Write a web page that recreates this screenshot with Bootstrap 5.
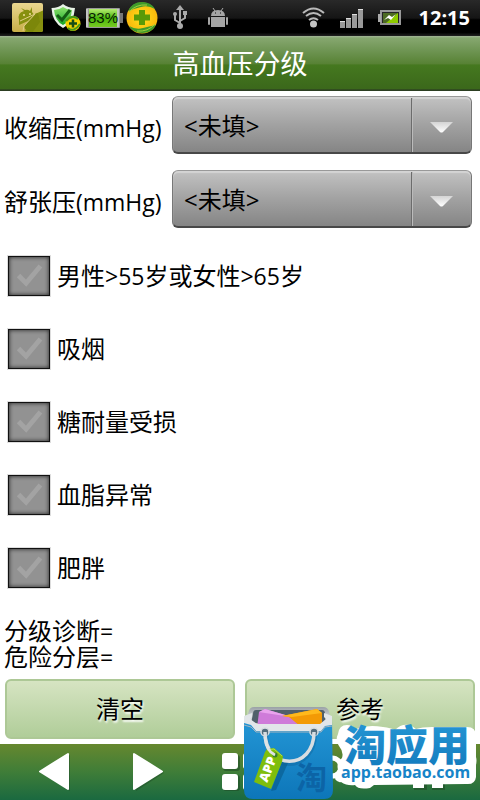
<!DOCTYPE html>
<html lang="zh-CN">
<head>
<meta charset="utf-8">
<meta name="viewport" content="width=device-width, initial-scale=1">
<title>高血压分级</title>
<link href="https://cdn.jsdelivr.net/npm/bootstrap@5.3.0/dist/css/bootstrap.min.css" rel="stylesheet">
<style>
body{font-family:"Open Sans","Noto Sans CJK SC",sans-serif;font-size:24px;line-height:26px;color:#000;background:#fff}
.app{min-height:100vh}
.latin{font-size:23px}
.status-bar{height:36px;background:linear-gradient(#292929,#151515 50%,#000 55%,#000 90%,#222)}
.status-bar svg{height:36px;flex:none}
.clock{font-size:20px;font-weight:700;color:#fff;padding:0 10px 0 14px}
.title-bar{height:55px;padding-top:1px;font-size:27px;font-weight:400;color:#fff;background:linear-gradient(#a3b698,#86a76f 4%,#709655 25%,#588235 50%,#45781f 53%,#3b681b 96%,#2c3e22 98%,#2c3e22)}
.field-row{min-height:74px;padding:5px 8px 11px 4px}
.field-row label{width:168px;flex:none;padding-top:6px;white-space:nowrap}
.picker{position:relative}
.picker select{display:block;height:58px;width:100%;padding:2px 70px 0 11px;appearance:none;color:#000;border:1px solid #777;border-top-color:#999;border-bottom:2px solid #484848;border-radius:6px;background:linear-gradient(#c2c2c2,#a2a2a2 50%,#858585);box-shadow:inset 0 2px 1px #d4d4d4}
.picker svg{position:absolute;right:0;top:0;pointer-events:none}
.check-row{height:73px}
.check-row input{appearance:none;flex:none;width:42px;height:40px;margin:1px 7px 0 0;border:1px solid #111;outline:1px solid #ddd;box-shadow:inset 0 0 4px #222;background:#929292 url("data:image/svg+xml,%3Csvg xmlns='http://www.w3.org/2000/svg' viewBox='0 0 42 39'%3E%3Cpath d='M10 19l8 8 15-18' fill='none' stroke='%23a3a3a3' stroke-width='5'/%3E%3C/svg%3E") center/100% 100% no-repeat}
.check-row input:checked{background-color:#6fa04a}
.results{padding:0 4px}
.actions{padding:9px 5px 5px;gap:10px}
.actions .btn{height:60px;font-size:24px;color:#000;border:2px solid #adc896;border-radius:6px;background:linear-gradient(#d6e4c2,#b0cd99);text-shadow:1px 2px 2px #fff}
.nav-strip{height:56px;padding:0 6px;background:linear-gradient(#66882f,#3f7d38 50%,#1a6940)}
.nav-strip button{border:0;background:none;padding:0}
.watermark{position:absolute;right:0;bottom:0;pointer-events:none}
.wm-name{font:900 42px "Noto Sans CJK SC",sans-serif}
.wm-url{font:700 16px "Open Sans",sans-serif}
.wm-tag{font:800 13px "Open Sans",sans-serif}
.wm-bag{font:700 31px "Noto Sans CJK SC",sans-serif}
.level{font:15px "Liberation Sans",sans-serif}
</style>
<script src="https://cdn.jsdelivr.net/npm/bootstrap@5.3.0/dist/js/bootstrap.bundle.min.js"></script>
</head>
<body>
<div class="app d-flex flex-column position-relative overflow-hidden">
<div class="status-bar d-flex align-items-center">
  <svg width="51" height="36" viewBox="0 0 51 36" aria-hidden="true">
    <defs><linearGradient id="gold" x2="0" y2="1"><stop stop-color="#ead68f"/><stop offset="1" stop-color="#c8ae48"/></linearGradient><clipPath id="tile"><rect x="12" y="3" width="31" height="29" rx="2"/></clipPath></defs>
    <rect x="12" y="3" width="31" height="29" rx="2" fill="url(#gold)"/>
    <g clip-path="url(#tile)" fill="#87900f"><path d="M19 20q-2-7 5-9l-3-3 4 2q3-1 5 1l2-4 0 5q3 3 3 6l-16 7z"/><path d="M35 14l9-4v24H24l2-5-2-3z"/><path d="M24 26l11-12 3-1 2 9-8 11-7-4z" fill="#7c870a"/><path d="M20 21l15-7-11 12-1 5" fill="none" stroke="#dfcd88" stroke-width="1"/><circle cx="24" cy="15" r="1" fill="#eedf9d"/><circle cx="30" cy="14" r="1" fill="#eedf9d"/></g>
  </svg>
  <svg width="34" height="36" viewBox="51 0 34 36" aria-hidden="true">
    <defs><linearGradient id="shield" x2="0" y2="1"><stop stop-color="#8ce26b"/><stop offset="1" stop-color="#13a425"/></linearGradient></defs>
    <path d="M63 4q5 4 12 4-1 14-12 20Q52 22 51.500 8q7 0 11.500-4z" fill="#e9f3e7"/><path d="M63 7q4 3 9 3-1 11-9 15-8-4-9-15 5 0 9-3z" fill="url(#shield)"/>
    <path d="M57 15l5 5 8-10" fill="none" stroke="#145d14" stroke-width="3"/>
    <circle cx="73" cy="23.500" r="7.500" fill="#f0d100"/><path d="M66 21q6-7 12-2M68 28q6 5 12-4" fill="none" stroke="#4a9a18" stroke-width="2"/><path d="M73 19.500v8M69 23.500h8" stroke="#174d16" stroke-width="2.500"/>
  </svg>
  <svg width="41" height="36" viewBox="85 0 41 36" aria-hidden="true">
    <defs><linearGradient id="cell" x2="0" y2="1"><stop stop-color="#b6ed72"/><stop offset=".5" stop-color="#47b509"/><stop offset="1" stop-color="#78ca22"/></linearGradient></defs>
    <rect x="86" y="8" width="34" height="20" rx="1" fill="#999"/><rect x="89" y="9" width="28" height="18" fill="url(#cell)"/><rect x="120" y="13" width="3" height="10" fill="#777"/><path d="M87 9v18M118 9v18" stroke="#eee"/><text class="level" x="103" y="23" text-anchor="middle" fill="#071c03">83%</text>
  </svg>
  <svg width="38" height="36" viewBox="126 0 38 36" aria-hidden="true">
    <defs><radialGradient id="orb"><stop stop-color="#ffe11c"/><stop offset="1" stop-color="#f9b70c"/></radialGradient></defs>
    <circle cx="142" cy="18" r="15.500" fill="url(#orb)"/><path d="M128 11Q132 2 142 2q9 0 13 7-7-4-14-2-8 2-13 4zM156 25q-4 8-14 8-9 0-13-7 7 4 14 2 8-2 13-3z" fill="#3f9b2b"/><path d="M129 12q7-8 18-7M155 24q-7 8-18 7" fill="none" stroke="#a3cf3c"/><path d="M142 10v15M134 17.500h16" stroke="#5a9a08" stroke-width="6"/>
  </svg>
  <svg width="36" height="36" viewBox="164 0 36 36" aria-hidden="true">
    <g fill="none" stroke="#aaa" stroke-width="2"><path d="M180 8v17M180 23l-5-3v-6M180 21l5-3v-5"/></g><g fill="#aaa"><path d="M180 5l4 5h-8z"/><circle cx="175" cy="14" r="2"/><rect x="183" y="11" width="4" height="4"/><circle cx="180" cy="26" r="3"/></g>
  </svg>
  <svg width="36" height="36" viewBox="200 0 36 36" aria-hidden="true">
    <g fill="#a5a5a5"><path d="M211 16q0-6 7-6t7 6z"/><rect x="211" y="17" width="14" height="10"/><rect x="208" y="17" width="2" height="8" rx="1"/><rect x="226" y="17" width="2" height="8" rx="1"/></g><path d="M213 8l2 3M223 8l-2 3" stroke="#aaa"/><path d="M215 13h1M220 13h1" stroke="#111"/>
  </svg>
  <div class="ms-auto d-flex align-items-center">
    <svg width="103" height="36" viewBox="302 0 103 36" aria-hidden="true">
      <g fill="none" stroke="#b9b9b9" stroke-width="2"><path d="M303 13q10.500-9 21 0M306 16q7.500-6 15 0M309 20q4.500-3.500 9 0"/></g><circle cx="313.500" cy="24" r="3.500" fill="#c4c4c4"/>
      <g fill="#999"><path d="M340 21h5v7h-5zM346 18h5v10h-5zM352 14h5v14h-5zM358 9h5v19h-5z"/></g><path d="M340 21.500h5M346 18.500h5M352 14.500h5M358 9.500h5" stroke="#ddd"/>
      <rect x="381" y="11" width="19" height="13" fill="#252525" stroke="#999" stroke-width="2"/><rect x="378" y="14" width="3" height="8" fill="#aaa"/><path d="M383 13h15v10h-15z" fill="#4d6b22"/><path d="M398 13v10h-12z" fill="#8ecb00"/><path d="M384 20l5-5 3 2 4-3-5 6-3-2z" fill="#fff"/>
    </svg>
    <span class="clock">12:15</span>
  </div>
</div>
<h1 class="title-bar d-flex align-items-center justify-content-center m-0">高血压分级</h1>
<main class="flex-grow-1 d-flex flex-column">
  <div class="field-row d-flex align-items-center">
    <label for="systolic">收缩压<span class="latin">(mmHg)</span></label>
    <div class="picker flex-grow-1"><select id="systolic"><option>&lt;未填&gt;</option></select>
    <svg width="62" height="58" viewBox="0 0 62 58" aria-hidden="true"><defs><linearGradient id="arrow" x2="0" y2="1"><stop stop-color="#d4d4d4"/><stop offset="1" stop-color="#fff"/></linearGradient></defs><path d="M1.500 2v54" stroke="#6c6c6c"/><path d="M2.500 2v54" stroke="#bbb"/><path d="M20 26h23L33 36q-1.500 1-3 0z" fill="url(#arrow)"/></svg></div>
  </div>
  <div class="field-row d-flex align-items-center">
    <label for="diastolic">舒张压<span class="latin">(mmHg)</span></label>
    <div class="picker flex-grow-1"><select id="diastolic"><option>&lt;未填&gt;</option></select>
    <svg width="62" height="58" viewBox="0 0 62 58" aria-hidden="true"><path d="M1.500 2v54" stroke="#6c6c6c"/><path d="M2.500 2v54" stroke="#bbb"/><path d="M20 26h23L33 36q-1.500 1-3 0z" fill="url(#arrow)"/></svg></div>
  </div>
  <div>
    <div class="check-row d-flex align-items-center px-2"><input type="checkbox" id="age"><label for="age">男性<span class="latin">&gt;55</span>岁或女性<span class="latin">&gt;65</span>岁</label></div>
    <div class="check-row d-flex align-items-center px-2"><input type="checkbox" id="smoke"><label for="smoke">吸烟</label></div>
    <div class="check-row d-flex align-items-center px-2"><input type="checkbox" id="glucose"><label for="glucose">糖耐量受损</label></div>
    <div class="check-row d-flex align-items-center px-2"><input type="checkbox" id="lipid"><label for="lipid">血脂异常</label></div>
    <div class="check-row d-flex align-items-center px-2"><input type="checkbox" id="obesity"><label for="obesity">肥胖</label></div>
  </div>
  <div class="results mt-auto"><div>分级诊断<span class="latin">=</span></div><div>危险分层<span class="latin">=</span></div></div>
  <div class="actions d-flex"><button class="btn flex-fill w-50" type="button">清空</button><button class="btn flex-fill w-50" type="button">参考</button></div>
</main>
<nav class="nav-strip d-flex">
  <button class="flex-fill" type="button" aria-label="后退"><svg width="40" height="44" viewBox="0 0 40 44"><path d="M37 5v36L8 23z" fill="#204d27" opacity=".5"/><path d="M35 4v35L7 21.500z" fill="#fff" stroke="#fff" stroke-linejoin="round" stroke-width="2"/></svg></button>
  <button class="flex-fill" type="button" aria-label="前进"><svg width="40" height="44" viewBox="0 0 40 44"><path d="M10 5v36L38 23z" fill="#204d27" opacity=".5"/><path d="M8 4v35l28-17.500z" fill="#fff" stroke="#fff" stroke-linejoin="round" stroke-width="2"/></svg></button>
  <button class="flex-fill" type="button" aria-label="目录"><svg width="40" height="44" viewBox="0 0 40 44"><g fill="#204d27" opacity=".6"><rect x="3" y="5" width="17" height="16" rx="3"/><rect x="3" y="25" width="17" height="16" rx="3"/></g><g fill="#fff"><rect x="2" y="3" width="16" height="16" rx="3"/><rect x="2" y="24" width="16" height="16" rx="3"/><rect x="23" y="3" width="16" height="16" rx="3"/><rect x="23" y="24" width="16" height="16" rx="3"/></g></svg></button>
  <button class="flex-fill" type="button" aria-label="搜索"><svg width="40" height="44" viewBox="0 0 40 44"><circle cx="18" cy="17" r="9" fill="none" stroke="#fff" stroke-width="5"/></svg></button>
  <button class="flex-fill" type="button" aria-label="主页"><svg width="40" height="44" viewBox="0 0 40 44"><path d="M7 20h13v20H7zM25 20h13v20H25z" fill="#204d27" opacity=".6"/><path d="M6 6h30v16H6zM6 20h11v18H6zM25 20h11v18H25z" fill="#fff"/></svg></button>
</nav>
<svg class="watermark" width="240" height="100" viewBox="0 0 240 100" role="img" aria-label="淘应用">
  <defs>
    <linearGradient id="bag" x2="0" y2="1"><stop stop-color="#2497d6"/><stop offset="1" stop-color="#0d76b9"/></linearGradient>
    <linearGradient id="rim" x2="0" y2="1"><stop stop-color="#9aa1a6"/><stop offset="1" stop-color="#e8ebed"/></linearGradient>
    <linearGradient id="word" x2="0" y2="1"><stop stop-color="#289bd8"/><stop offset="1" stop-color="#1279bc"/></linearGradient>
  </defs>
  <path d="M98 34q1-9 9-9 5 0 9 4 12-5 27-2 8 1 12 3 6-6 13-5 5 1 8 4 6-2 16-2h35q9 0 9 9v21q1 3 0 8v12q-1 8-10 7l-92 1-4 3q-12 2-15-3-8 1-14-3-3 1-6-3l3-9q-2-8 4-12 2-6-3-12-4-6-1-12z" fill="#fff"/>
  <path d="M14 7h69q5 0 6 5l3 10H5l4-11q1-4 5-4z" fill="url(#rim)"/>
  <path d="M16 10h66q3 0 3 4l1 9H11l2-9q0-4 3-4z" fill="#51606a"/>
  <path d="M19 12l6-3 27 8 12 11H17z" fill="#cf7bd9"/><path d="M19 12l6-3 27 8-27-4z" fill="#e9a3ed"/>
  <path d="M42 16l35-7 5 4v13H60l-11-9z" fill="#f39a05"/><path d="M42 16l35-7 5 4-30 4z" fill="#ffb91c"/>
  <path d="M4 18l9 6h70l9-6 1 72q0 9-9 9H13q-9 0-9-9z" fill="url(#bag)"/>
  <path d="M4 16l8-3v4l-2 2 7 5h63l6-5-2-2v-4l8 3v9l-7 1-4 5H16l-5-6-7-2z" fill="#e2e6e9"/><path d="M4 25l7 2 5 5h65l4-5 7-1" fill="none" stroke="#a4b4bf"/>
  <text class="wm-bag" x="56" y="89" fill="#0c64a6">淘</text>
  <circle cx="25" cy="32" r="4" fill="#536d7d" stroke="#d9dfe3" stroke-width="1.500"/><circle cx="74" cy="32" r="4" fill="#536d7d" stroke="#d9dfe3" stroke-width="1.500"/>
  <path d="M43 58l-12 33 5-1 12-27z" fill="#075889" opacity=".6"/>
  <path d="M25 32c0 42 49 38 49 0" fill="none" stroke="#0e6298" stroke-width="4" transform="translate(1 2)" opacity=".4"/>
  <path d="M25 32c0 39 49 39 49 0" fill="none" stroke="#d8dde1" stroke-width="3.500"/>
  <path d="M27 49l7-1 9 8-1 6-11 27-17-7 11-30z" fill="#7fbe0b"/><path d="M27 50l7-1 8 7" fill="none" stroke="#b0de45"/><circle cx="35" cy="55" r="2.500" fill="#397f28"/><path d="M25 37q1 14 10 18" fill="none" stroke="#dfe3e5" stroke-width="3"/>
  <text class="wm-tag" text-anchor="middle" transform="translate(32 71) rotate(-69)" fill="#fff">APP</text>
  <text class="wm-name" x="104" y="61" fill="url(#word)">淘应用</text><text class="wm-url" x="101" y="78" fill="#1684c8">app.taobao.com</text>
</svg>
</div>
</body>
</html>
